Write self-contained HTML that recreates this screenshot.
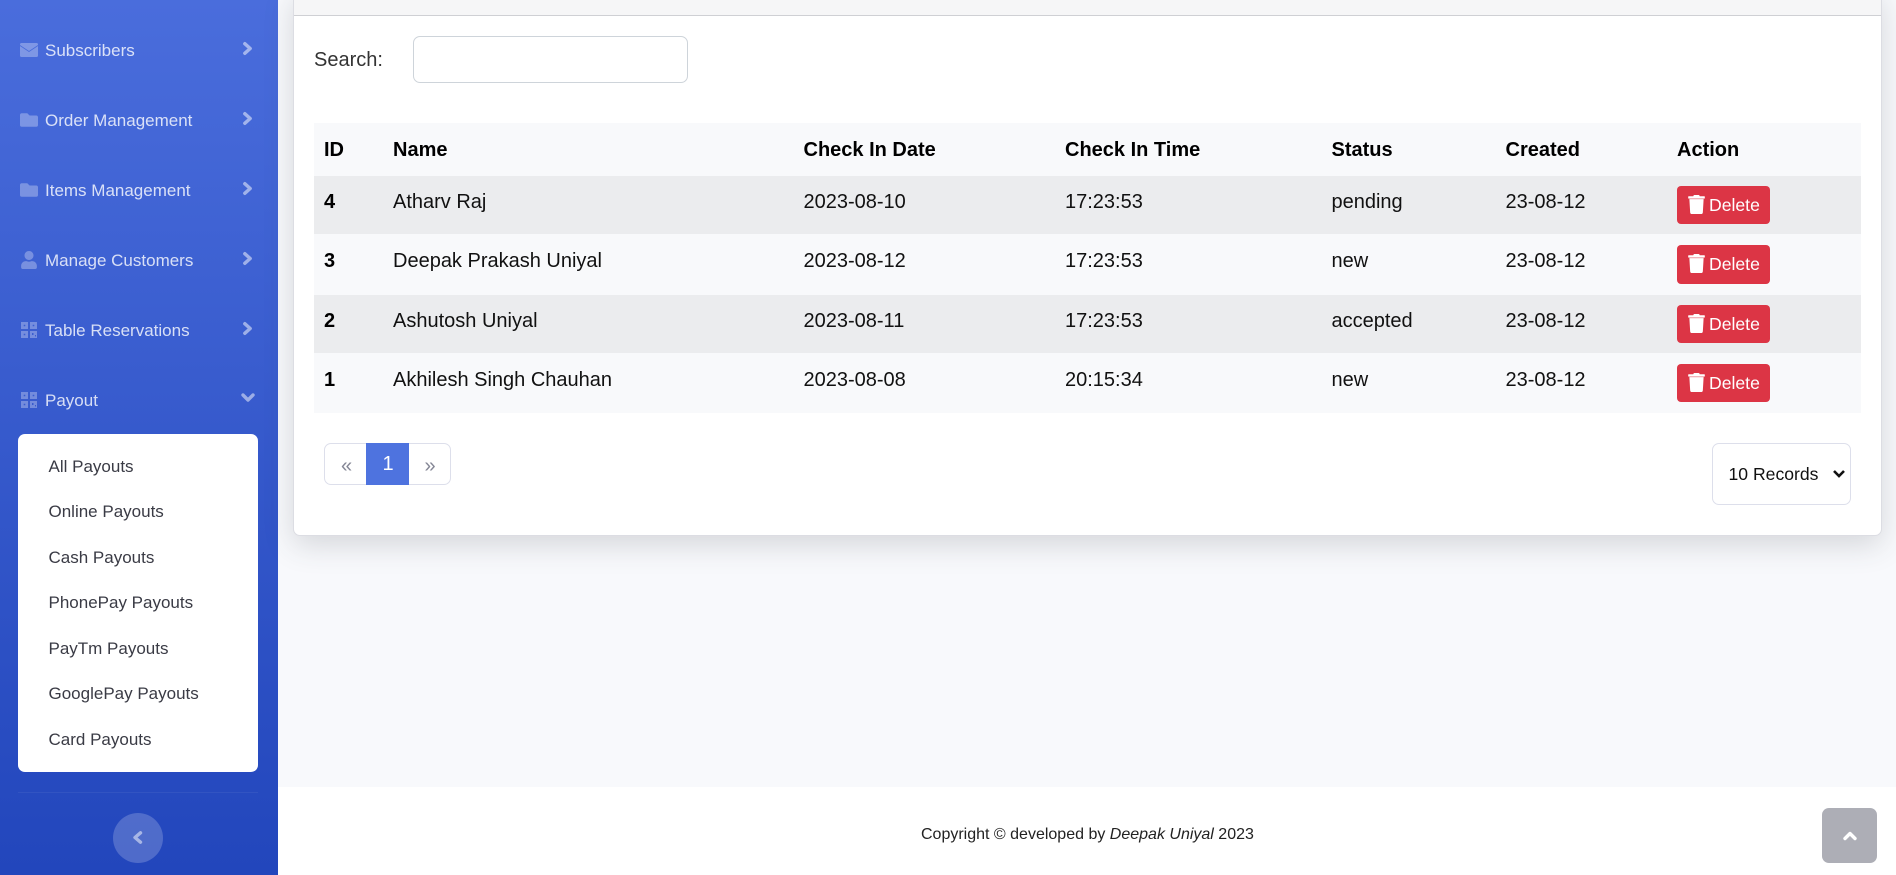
<!DOCTYPE html>
<html><head><meta charset="utf-8"><style>
html,body{margin:0;padding:0;width:1896px;height:875px;overflow:hidden;background:#f8f9fc;font-family:"Liberation Sans",sans-serif}
.a{position:absolute;white-space:nowrap}
.t{position:absolute;white-space:nowrap;line-height:30px;height:30px}
svg{position:absolute;display:block}
#side{position:absolute;left:0;top:0;width:278px;height:875px;background:linear-gradient(180deg,#4a6ddc 0%,#2246bc 100%)}
.n{font-size:17px;color:rgba(255,255,255,.8);left:45px}
.i{fill:rgba(255,255,255,.3)}
.c{fill:none;stroke:rgba(255,255,255,.5);stroke-width:3.4;stroke-linecap:round;stroke-linejoin:round}
.s{font-size:17px;color:#3a3b45;left:48.5px}
.h{font-size:20px;font-weight:bold;color:#000}
.d{font-size:20px;color:#111}
.b{font-size:20px;font-weight:bold;color:#000}
.r{position:absolute;left:314px;width:1547px}
.del{position:absolute;left:1677px;width:93px;background:#dc3545;border-radius:4px}
.del span{position:absolute;left:32px;top:4px;line-height:30px;font-size:17.6px;color:#fff}
.del svg{left:11px;top:9px;fill:#fff}
</style></head><body>
<div id="side">
<svg class="i" style="left:20px;top:43px" width="18" height="14" viewBox="0 0 18 14"><path d="M1.5 0H16.5A1.5 1.5 0 0 1 18 1.5V2L9 8 0 2V1.5A1.5 1.5 0 0 1 1.5 0zM0 3L9 9 18 3V12.5A1.5 1.5 0 0 1 16.5 14H1.5A1.5 1.5 0 0 1 0 12.5z"/></svg>
<div class="t n" style="top:36px">Subscribers</div>
<svg class="c" style="left:242px;top:41px" width="12" height="15" viewBox="0 0 12 15"><path d="M2.8 2.7L8.2 7.5 2.8 12.3"/></svg>

<svg class="i" style="left:20px;top:110.5px" width="18" height="18" viewBox="0 0 512 512"><path d="M464 128H272l-64-64H48C21.49 64 0 85.49 0 112v288c0 26.51 21.49 48 48 48h416c26.51 0 48-21.49 48-48V176c0-26.51-21.49-48-48-48z"/></svg>
<div class="t n" style="top:106px">Order Management</div>
<svg class="c" style="left:242px;top:111px" width="12" height="15" viewBox="0 0 12 15"><path d="M2.8 2.7L8.2 7.5 2.8 12.3"/></svg>

<svg class="i" style="left:20px;top:180.5px" width="18" height="18" viewBox="0 0 512 512"><path d="M464 128H272l-64-64H48C21.49 64 0 85.49 0 112v288c0 26.51 21.49 48 48 48h416c26.51 0 48-21.49 48-48V176c0-26.51-21.49-48-48-48z"/></svg>
<div class="t n" style="top:176px">Items Management</div>
<svg class="c" style="left:242px;top:181px" width="12" height="15" viewBox="0 0 12 15"><path d="M2.8 2.7L8.2 7.5 2.8 12.3"/></svg>

<svg class="i" style="left:21px;top:251px" width="16" height="18" viewBox="0 0 448 512"><path d="M224 256c70.7 0 128-57.3 128-128S294.7 0 224 0 96 57.3 96 128s57.3 128 128 128zm89.6 32h-16.7c-22.2 10.2-46.9 16-72.9 16s-50.6-5.8-72.9-16h-16.7C60.2 288 0 348.2 0 422.4V464c0 26.5 21.5 48 48 48h352c26.5 0 48-21.5 48-48v-41.6c0-74.2-60.2-134.4-134.4-134.4z"/></svg>
<div class="t n" style="top:246px">Manage Customers</div>
<svg class="c" style="left:242px;top:251px" width="12" height="15" viewBox="0 0 12 15"><path d="M2.8 2.7L8.2 7.5 2.8 12.3"/></svg>

<svg class="i" style="left:21px;top:322px" width="16" height="16" viewBox="0 0 16 16"><path fill-rule="evenodd" d="M0 0H7V7H0zM2.7 2.7V4.3H4.3V2.7zM9 0H16V7H9zM11.7 2.7V4.3H13.3V2.7zM0 9H7V16H0zM2.7 11.7V13.3H4.3V11.7zM9 9H16V16H9zM11 11V13H12.5V11zM14 13V14.5H15V13z"/></svg>
<div class="t n" style="top:316px">Table Reservations</div>
<svg class="c" style="left:242px;top:321px" width="12" height="15" viewBox="0 0 12 15"><path d="M2.8 2.7L8.2 7.5 2.8 12.3"/></svg>

<svg class="i" style="left:21px;top:392px" width="16" height="16" viewBox="0 0 16 16"><path fill-rule="evenodd" d="M0 0H7V7H0zM2.7 2.7V4.3H4.3V2.7zM9 0H16V7H9zM11.7 2.7V4.3H13.3V2.7zM0 9H7V16H0zM2.7 11.7V13.3H4.3V11.7zM9 9H16V16H9zM11 11V13H12.5V11zM14 13V14.5H15V13z"/></svg>
<div class="t n" style="top:386px">Payout</div>
<svg class="c" style="left:240px;top:391px" width="16" height="13" viewBox="0 0 16 13"><path d="M3 4L8 9 13 4"/></svg>

<div class="a" style="left:18px;top:434px;width:240px;height:338px;background:#fff;border-radius:7px"></div>
<div class="t s" style="top:452px">All Payouts</div>
<div class="t s" style="top:497px">Online Payouts</div>
<div class="t s" style="top:543px">Cash Payouts</div>
<div class="t s" style="top:588px">PhonePay Payouts</div>
<div class="t s" style="top:634px">PayTm Payouts</div>
<div class="t s" style="top:679px">GooglePay Payouts</div>
<div class="t s" style="top:725px">Card Payouts</div>
<div class="a" style="left:18px;top:792px;width:240px;height:1px;background:rgba(255,255,255,.06)"></div>
<div class="a" style="left:113px;top:813px;width:50px;height:50px;border-radius:50%;background:rgba(255,255,255,.2)"></div>
<svg class="c" style="left:131px;top:830px" width="13" height="15" viewBox="0 0 13 15"><path d="M9.5 2.8L4 7.5 9.5 12.2"/></svg>
</div>

<div class="a" style="left:293px;top:-10px;width:1589px;height:546px;background:#fff;border:1px solid #dcdde3;border-radius:7px;box-sizing:border-box;box-shadow:0 9px 30px rgba(58,59,69,.18)"></div>
<div class="a" style="left:294px;top:0;width:1587px;height:15px;background:#f6f6f7;border-bottom:1px solid #cfd0d4"></div>

<div class="t" style="left:314px;top:45px;font-size:20px;color:#333">Search:</div>
<div class="a" style="left:413px;top:36px;width:275px;height:47px;box-sizing:border-box;background:#fff;border:1px solid #ced4da;border-radius:7px"></div>

<div class="r" style="top:123px;height:53px;background:#f8f9fb"></div>
<div class="r" style="top:176px;height:58px;background:#ebecee"></div>
<div class="r" style="top:234px;height:61px;background:#f8f9fb"></div>
<div class="r" style="top:295px;height:58px;background:#ebecee"></div>
<div class="r" style="top:353px;height:60px;background:#f8f9fb"></div>

<div class="t h" style="left:324px;top:135px">ID</div>
<div class="t h" style="left:393px;top:135px">Name</div>
<div class="t h" style="left:803.5px;top:135px">Check In Date</div>
<div class="t h" style="left:1065px;top:135px">Check In Time</div>
<div class="t h" style="left:1331.5px;top:135px">Status</div>
<div class="t h" style="left:1505.5px;top:135px">Created</div>
<div class="t h" style="left:1677px;top:135px">Action</div>

<div class="t b" style="left:324px;top:187px">4</div>
<div class="t d" style="left:393px;top:187px">Atharv Raj</div>
<div class="t d" style="left:803.5px;top:187px">2023-08-10</div>
<div class="t d" style="left:1065px;top:187px">17:23:53</div>
<div class="t d" style="left:1331.5px;top:187px">pending</div>
<div class="t d" style="left:1505.5px;top:187px">23-08-12</div>
<div class="del" style="top:186px;height:38px"><svg width="17" height="19" viewBox="0 0 448 512"><path d="M432 32H312l-9.4-18.7A24 24 0 0 0 281.1 0H166.8a23.72 23.72 0 0 0-21.4 13.3L136 32H16A16 16 0 0 0 0 48v32a16 16 0 0 0 16 16h416a16 16 0 0 0 16-16V48a16 16 0 0 0-16-16zM53.2 467a48 48 0 0 0 47.9 45h245.8a48 48 0 0 0 47.9-45L416 112H32z"/></svg><span>Delete</span></div>

<div class="t b" style="left:324px;top:246px">3</div>
<div class="t d" style="left:393px;top:246px">Deepak Prakash Uniyal</div>
<div class="t d" style="left:803.5px;top:246px">2023-08-12</div>
<div class="t d" style="left:1065px;top:246px">17:23:53</div>
<div class="t d" style="left:1331.5px;top:246px">new</div>
<div class="t d" style="left:1505.5px;top:246px">23-08-12</div>
<div class="del" style="top:245px;height:39px"><svg width="17" height="19" viewBox="0 0 448 512"><path d="M432 32H312l-9.4-18.7A24 24 0 0 0 281.1 0H166.8a23.72 23.72 0 0 0-21.4 13.3L136 32H16A16 16 0 0 0 0 48v32a16 16 0 0 0 16 16h416a16 16 0 0 0 16-16V48a16 16 0 0 0-16-16zM53.2 467a48 48 0 0 0 47.9 45h245.8a48 48 0 0 0 47.9-45L416 112H32z"/></svg><span>Delete</span></div>

<div class="t b" style="left:324px;top:306px">2</div>
<div class="t d" style="left:393px;top:306px">Ashutosh Uniyal</div>
<div class="t d" style="left:803.5px;top:306px">2023-08-11</div>
<div class="t d" style="left:1065px;top:306px">17:23:53</div>
<div class="t d" style="left:1331.5px;top:306px">accepted</div>
<div class="t d" style="left:1505.5px;top:306px">23-08-12</div>
<div class="del" style="top:305px;height:38px"><svg width="17" height="19" viewBox="0 0 448 512"><path d="M432 32H312l-9.4-18.7A24 24 0 0 0 281.1 0H166.8a23.72 23.72 0 0 0-21.4 13.3L136 32H16A16 16 0 0 0 0 48v32a16 16 0 0 0 16 16h416a16 16 0 0 0 16-16V48a16 16 0 0 0-16-16zM53.2 467a48 48 0 0 0 47.9 45h245.8a48 48 0 0 0 47.9-45L416 112H32z"/></svg><span>Delete</span></div>

<div class="t b" style="left:324px;top:365px">1</div>
<div class="t d" style="left:393px;top:365px">Akhilesh Singh Chauhan</div>
<div class="t d" style="left:803.5px;top:365px">2023-08-08</div>
<div class="t d" style="left:1065px;top:365px">20:15:34</div>
<div class="t d" style="left:1331.5px;top:365px">new</div>
<div class="t d" style="left:1505.5px;top:365px">23-08-12</div>
<div class="del" style="top:364px;height:38px"><svg width="17" height="19" viewBox="0 0 448 512"><path d="M432 32H312l-9.4-18.7A24 24 0 0 0 281.1 0H166.8a23.72 23.72 0 0 0-21.4 13.3L136 32H16A16 16 0 0 0 0 48v32a16 16 0 0 0 16 16h416a16 16 0 0 0 16-16V48a16 16 0 0 0-16-16zM53.2 467a48 48 0 0 0 47.9 45h245.8a48 48 0 0 0 47.9-45L416 112H32z"/></svg><span>Delete</span></div>

<div class="a" style="left:324px;top:443px;width:127px;height:42px;box-sizing:border-box;background:#fff;border:1px solid #dddfeb;border-radius:7px"></div>
<div class="a" style="left:366px;top:443px;width:43px;height:42px;background:#4e73df"></div>
<div class="t" style="left:341px;top:451px;font-size:20px;color:#858796">«</div>
<div class="t" style="left:382.5px;top:449px;font-size:20px;color:#fff">1</div>
<div class="t" style="left:424.5px;top:451px;font-size:20px;color:#858796">»</div>

<div class="a" style="left:1712px;top:443px;width:139px;height:62px;box-sizing:border-box;background:#fff;border:1px solid #dddfeb;border-radius:7px"></div>
<div class="t" style="left:1728.5px;top:459px;font-size:17.6px;color:#111">10 Records</div>
<svg style="left:1833px;top:469px;fill:none;stroke:#111;stroke-width:2.6" width="12" height="10" viewBox="0 0 12 10"><path d="M1 2l5 5 5-5"/></svg>

<div class="a" style="left:278px;top:787px;width:1618px;height:88px;background:#fff"></div>
<div class="t" style="left:921px;top:820px;font-size:16px;color:#222">Copyright © developed by <i>Deepak Uniyal</i> 2023</div>
<div class="a" style="left:1822px;top:808px;width:55px;height:55px;border-radius:7px;background:#adaeb6"></div>
<svg style="left:1842px;top:829px;fill:none;stroke:#fff;stroke-width:3.4;stroke-linecap:round;stroke-linejoin:round" width="16" height="13" viewBox="0 0 16 13"><path d="M3 9.5L8 4.5 13 9.5"/></svg>
</body></html>
